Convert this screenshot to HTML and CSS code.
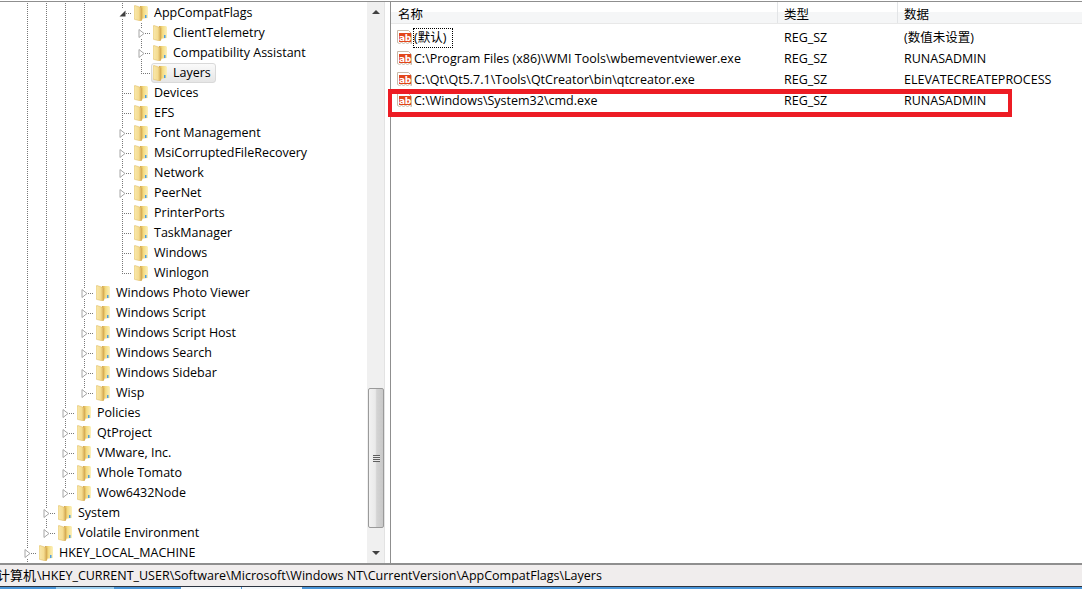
FILE: index.html
```html
<!DOCTYPE html>
<html lang="zh">
<head>
<meta charset="utf-8">
<title>注册表编辑器</title>
<link rel="stylesheet" href="styles.css">
</head>
<body>
<svg class="defs" width="0" height="0" aria-hidden="true">
  <defs>
    <linearGradient id="fa" x1="0" x2="1" y1="0" y2="0"><stop offset="0" stop-color="#f8e8ae"/><stop offset=".6" stop-color="#f5dc90"/><stop offset="1" stop-color="#cfa24a"/></linearGradient>
    <linearGradient id="fb" x1="0" x2="1" y1="0" y2="0"><stop offset="0" stop-color="#cfa24a"/><stop offset=".4" stop-color="#f3d97e"/><stop offset="1" stop-color="#fcf1bd"/></linearGradient>
    <symbol id="folder" viewBox="0 0 14 16">
      <path d="M6 1h7l1 1v11l-8 1z" fill="url(#fb)"/>
      <path d="M0 1 1 .5l6 2 1 1V15l-1 1-6-1.500-1-.5z" fill="url(#fa)" stroke="#dcb458" stroke-width=".5"/>
      <path d="M11 10h1.500v3H11z" fill="#4f9fe0"/>
    </symbol>
    <symbol id="ab" viewBox="0 0 16 15">
      <path d="M.5.500h11l3 3v10l-2-1-2 1-2-1-2 1-2-1-2 1-2-1z" fill="#fff" stroke="#c9b9a8"/>
      <rect x="2" y="3" width="12" height="9" fill="#e2461c"/>
      <text x="8" y="10.500" class="abtext">ab</text>
    </symbol>
    <symbol id="closed" viewBox="0 0 7 9"><path d="M1 .5 6 4.500 1 8.500z" fill="#fff" stroke="#a6a6a6"/></symbol>
    <symbol id="open" viewBox="0 0 7 9"><path d="M6.500 1.500v6h-6z" fill="#404040"/></symbol>
  </defs>
</svg>
<div class="app">
  <div class="panes">
    <div class="left">
      <div class="tree">
        <div class="row"><i class="c v"></i><i class="c v"></i><i class="c v"></i><i class="c v"></i><i class="c"></i><i class="c x"><svg class="ex"><use href="#open"/></svg></i><span class="item"><svg class="fo"><use href="#folder"/></svg>AppCompatFlags</span></div>
        <div class="row"><i class="c v"></i><i class="c v"></i><i class="c v"></i><i class="c v"></i><i class="c"></i><i class="c v"></i><i class="c x"><svg class="ex"><use href="#closed"/></svg></i><span class="item"><svg class="fo"><use href="#folder"/></svg>ClientTelemetry</span></div>
        <div class="row"><i class="c v"></i><i class="c v"></i><i class="c v"></i><i class="c v"></i><i class="c"></i><i class="c v"></i><i class="c x"><svg class="ex"><use href="#closed"/></svg></i><span class="item"><svg class="fo"><use href="#folder"/></svg>Compatibility Assistant</span></div>
        <div class="row"><i class="c v"></i><i class="c v"></i><i class="c v"></i><i class="c v"></i><i class="c"></i><i class="c v"></i><i class="c l"></i><span class="item sel"><svg class="fo"><use href="#folder"/></svg>Layers</span></div>
        <div class="row"><i class="c v"></i><i class="c v"></i><i class="c v"></i><i class="c v"></i><i class="c"></i><i class="c x"></i><span class="item"><svg class="fo"><use href="#folder"/></svg>Devices</span></div>
        <div class="row"><i class="c v"></i><i class="c v"></i><i class="c v"></i><i class="c v"></i><i class="c"></i><i class="c x"></i><span class="item"><svg class="fo"><use href="#folder"/></svg>EFS</span></div>
        <div class="row"><i class="c v"></i><i class="c v"></i><i class="c v"></i><i class="c v"></i><i class="c"></i><i class="c x"><svg class="ex"><use href="#closed"/></svg></i><span class="item"><svg class="fo"><use href="#folder"/></svg>Font Management</span></div>
        <div class="row"><i class="c v"></i><i class="c v"></i><i class="c v"></i><i class="c v"></i><i class="c"></i><i class="c x"><svg class="ex"><use href="#closed"/></svg></i><span class="item"><svg class="fo"><use href="#folder"/></svg>MsiCorruptedFileRecovery</span></div>
        <div class="row"><i class="c v"></i><i class="c v"></i><i class="c v"></i><i class="c v"></i><i class="c"></i><i class="c x"><svg class="ex"><use href="#closed"/></svg></i><span class="item"><svg class="fo"><use href="#folder"/></svg>Network</span></div>
        <div class="row"><i class="c v"></i><i class="c v"></i><i class="c v"></i><i class="c v"></i><i class="c"></i><i class="c x"><svg class="ex"><use href="#closed"/></svg></i><span class="item"><svg class="fo"><use href="#folder"/></svg>PeerNet</span></div>
        <div class="row"><i class="c v"></i><i class="c v"></i><i class="c v"></i><i class="c v"></i><i class="c"></i><i class="c x"></i><span class="item"><svg class="fo"><use href="#folder"/></svg>PrinterPorts</span></div>
        <div class="row"><i class="c v"></i><i class="c v"></i><i class="c v"></i><i class="c v"></i><i class="c"></i><i class="c x"></i><span class="item"><svg class="fo"><use href="#folder"/></svg>TaskManager</span></div>
        <div class="row"><i class="c v"></i><i class="c v"></i><i class="c v"></i><i class="c v"></i><i class="c"></i><i class="c x"></i><span class="item"><svg class="fo"><use href="#folder"/></svg>Windows</span></div>
        <div class="row"><i class="c v"></i><i class="c v"></i><i class="c v"></i><i class="c v"></i><i class="c"></i><i class="c l"></i><span class="item"><svg class="fo"><use href="#folder"/></svg>Winlogon</span></div>
        <div class="row"><i class="c v"></i><i class="c v"></i><i class="c v"></i><i class="c x"><svg class="ex"><use href="#closed"/></svg></i><span class="item"><svg class="fo"><use href="#folder"/></svg>Windows Photo Viewer</span></div>
        <div class="row"><i class="c v"></i><i class="c v"></i><i class="c v"></i><i class="c x"><svg class="ex"><use href="#closed"/></svg></i><span class="item"><svg class="fo"><use href="#folder"/></svg>Windows Script</span></div>
        <div class="row"><i class="c v"></i><i class="c v"></i><i class="c v"></i><i class="c x"><svg class="ex"><use href="#closed"/></svg></i><span class="item"><svg class="fo"><use href="#folder"/></svg>Windows Script Host</span></div>
        <div class="row"><i class="c v"></i><i class="c v"></i><i class="c v"></i><i class="c x"><svg class="ex"><use href="#closed"/></svg></i><span class="item"><svg class="fo"><use href="#folder"/></svg>Windows Search</span></div>
        <div class="row"><i class="c v"></i><i class="c v"></i><i class="c v"></i><i class="c x"><svg class="ex"><use href="#closed"/></svg></i><span class="item"><svg class="fo"><use href="#folder"/></svg>Windows Sidebar</span></div>
        <div class="row"><i class="c v"></i><i class="c v"></i><i class="c v"></i><i class="c l"><svg class="ex"><use href="#closed"/></svg></i><span class="item"><svg class="fo"><use href="#folder"/></svg>Wisp</span></div>
        <div class="row"><i class="c v"></i><i class="c v"></i><i class="c x"><svg class="ex"><use href="#closed"/></svg></i><span class="item"><svg class="fo"><use href="#folder"/></svg>Policies</span></div>
        <div class="row"><i class="c v"></i><i class="c v"></i><i class="c x"><svg class="ex"><use href="#closed"/></svg></i><span class="item"><svg class="fo"><use href="#folder"/></svg>QtProject</span></div>
        <div class="row"><i class="c v"></i><i class="c v"></i><i class="c x"><svg class="ex"><use href="#closed"/></svg></i><span class="item"><svg class="fo"><use href="#folder"/></svg>VMware, Inc.</span></div>
        <div class="row"><i class="c v"></i><i class="c v"></i><i class="c x"><svg class="ex"><use href="#closed"/></svg></i><span class="item"><svg class="fo"><use href="#folder"/></svg>Whole Tomato</span></div>
        <div class="row"><i class="c v"></i><i class="c v"></i><i class="c l"><svg class="ex"><use href="#closed"/></svg></i><span class="item"><svg class="fo"><use href="#folder"/></svg>Wow6432Node</span></div>
        <div class="row"><i class="c v"></i><i class="c x"><svg class="ex"><use href="#closed"/></svg></i><span class="item"><svg class="fo"><use href="#folder"/></svg>System</span></div>
        <div class="row"><i class="c v"></i><i class="c l"><svg class="ex"><use href="#closed"/></svg></i><span class="item"><svg class="fo"><use href="#folder"/></svg>Volatile Environment</span></div>
        <div class="row"><i class="c x"><svg class="ex"><use href="#closed"/></svg></i><span class="item"><svg class="fo"><use href="#folder"/></svg>HKEY_LOCAL_MACHINE</span></div>
      </div>
      <div class="scrollbar">
        <div class="arrow"><span class="up"></span></div>
        <div class="track">
          <div class="thumb"><span class="grip"></span></div>
        </div>
        <div class="arrow"><span class="down"></span></div>
      </div>
    </div>
    <div class="right">
      <div class="head">
        <div class="h name">名称</div>
        <div class="h type">类型</div>
        <div class="h data">数据</div>
      </div>
      <div class="vals">
        <div class="val"><div class="name"><svg class="abi"><use href="#ab"/></svg><span class="focus">(默认)</span></div><div class="type">REG_SZ</div><div class="data">(数值未设置)</div></div>
        <div class="val"><div class="name"><svg class="abi"><use href="#ab"/></svg><span class="nm">C:\Program Files (x86)\WMI Tools\wbemeventviewer.exe</span></div><div class="type">REG_SZ</div><div class="data">RUNASADMIN</div></div>
        <div class="val"><div class="name"><svg class="abi"><use href="#ab"/></svg><span class="nm">C:\Qt\Qt5.7.1\Tools\QtCreator\bin\qtcreator.exe</span></div><div class="type">REG_SZ</div><div class="data">ELEVATECREATEPROCESS</div></div>
        <div class="val"><div class="name"><svg class="abi"><use href="#ab"/></svg><span class="nm">C:\Windows\System32\cmd.exe</span></div><div class="type">REG_SZ</div><div class="data">RUNASADMIN</div></div>
      </div>
      <div class="mark"></div>
    </div>
  </div>
  <div class="status"><span class="path"><span class="cn">计算机</span>\HKEY_CURRENT_USER\Software\Microsoft\Windows NT\CurrentVersion\AppCompatFlags\Layers</span></div>
  <div class="taskbar">
    <span class="tb w55"></span><span class="tb lt w58"></span><span class="tb w65"></span><span class="tb wh w60"></span><span class="tb wh w60"></span><span class="tb fill"></span>
  </div>
</div>
</body>
</html>
```

FILE: styles.css
```css
* { box-sizing: border-box; }
html, body { margin: 0; padding: 0; }
body {
  width: 1082px;
  height: 589px;
  overflow: hidden;
  background: #fff;
  color: #000;
  font: 12.5px/20px "Open Sans", "Noto Sans CJK SC", sans-serif;
}
.defs { display: block; height: 0; }
.abtext { font: bold 9px "DejaVu Sans", sans-serif; fill: #fff; text-anchor: middle; letter-spacing: -.3px; }

.app { display: flex; flex-direction: column; height: 589px; }
.panes {
  display: flex;
  height: 565px;
  border-bottom: 2px solid #8f8f8f;
  padding-top: 2px;
  position: relative;
  background: linear-gradient(#8f8f8f, #8f8f8f) 0 1px / 100% 1px no-repeat;
}

/* tree */
.left { display: flex; width: 390px; flex: none; border-right: 0; }
.tree { width: 367px; flex: none; padding: 1px 0 0 18px; overflow: hidden; }
.row { display: flex; height: 20px; align-items: stretch; white-space: nowrap; }
.c { display: block; position: relative; flex: none; width: 19px; height: 20px; background-repeat: no-repeat; }
.v {
  background-image: repeating-linear-gradient(#777 0 1px, transparent 1px 2px);
  background-size: 1px 20px;
  background-position: 9px 0;
}
.x {
  background-image:
    repeating-linear-gradient(#777 0 1px, transparent 1px 2px),
    repeating-linear-gradient(90deg, #777 0 1px, transparent 1px 2px);
  background-size: 1px 20px, 10px 1px;
  background-position: 9px 0, 9px 10px;
}
.l {
  background-image:
    repeating-linear-gradient(#777 0 1px, transparent 1px 2px),
    repeating-linear-gradient(90deg, #777 0 1px, transparent 1px 2px);
  background-size: 1px 10px, 10px 1px;
  background-position: 9px 0, 9px 10px;
}
.ex { position: absolute; left: 6px; top: 6px; width: 7px; height: 9px; background: #fff; }
.item {
  display: flex;
  align-items: center;
  height: 20px;
  padding: 0 4px 0 2px;
  border: 1px solid transparent;
  border-left-width: 0;
  border-right-width: 0;
}
.fo { flex: none; width: 14px; height: 16px; margin-right: 6px; }
.sel {
  height: 20px;
  padding-left: 1px;
  border: 1px solid #d9d9d9;
  border-radius: 3px;
  background: linear-gradient(#fafafa, #e6e6e6);
}

/* scrollbar */
.scrollbar { width: 18px; flex: none; display: flex; flex-direction: column; background: #f0f0f0; border-right: 1px solid #e3e3e3; }
.arrow { height: 20px; flex: none; display: flex; align-items: center; justify-content: center; }
.up { width: 0; height: 0; border: 4px solid transparent; border-top: 0; border-bottom: 4px solid #404040; }
.down { width: 0; height: 0; border: 4px solid transparent; border-bottom: 0; border-top: 4px solid #404040; }
.track { flex: 1; display: flex; flex-direction: column; justify-content: flex-end; padding-bottom: 15px; }
.thumb {
  width: 16px;
  margin-left: 1px;
  height: 140px;
  border: 1px solid #9a9a9a;
  border-radius: 2px;
  background: linear-gradient(90deg, #f2f2f2, #eaeaea 45%, #d4d4d4 55%, #c9c9c9);
  display: flex;
  align-items: center;
  justify-content: center;
}
.grip {
  width: 7px;
  height: 7px;
  background: repeating-linear-gradient(#5f5f5f 0 1px, #e8e8e8 1px 2px);
}

/* list */
.right { flex: 1; position: relative; border-left: 1px solid #8f8f8f; min-width: 0; }
.head { display: flex; height: 22px; background: linear-gradient(#fff 50%, #f5f6f7 50%); border-bottom: 1px solid #e8e8e8; line-height: 26px; }
.h { padding-left: 7px; border-right: 1px solid #e3e5e7; }
.h.data { border-right: 0; }
.name { width: 387px; flex: none; display: flex; align-items: center; }
.type { width: 120px; flex: none; padding-left: 6px; }
.data { flex: 1; padding-left: 6px; white-space: nowrap; }
.head .h.name { display: block; padding-left: 7px; }
.vals { padding-top: 3px; }
.val { display: flex; height: 21px; line-height: 21px; white-space: nowrap; }
.abi { flex: none; width: 16px; height: 15px; margin: 0 0 0 6px; }
.nm { padding-left: 1px; }
.focus { padding: 0 0 0 1px; width: 40px; height: 20px; outline: 1px dotted #000; outline-offset: -1px; line-height: 20px; }
.mark { position: absolute; left: -3px; top: 87px; width: 624px; height: 28px; border: 4px solid #ed1c24; border-top-width: 5px; border-bottom-width: 5px; }

/* status */
.status { height: 21px; flex: none; background: #f0eded; line-height: 21px; overflow: hidden; white-space: nowrap; }
.path { display: block; margin-left: -3px; }
.cn { font-size: 13px; margin-right: 1px; }
.taskbar { display: flex; height: 3px; flex: none; border-top: 1px solid #2c3440; background: #4a95d8; }
.tb { display: block; background: #4a95d8; margin-right: 1px; }
.lt { background: #9fd0f0; }
.wh { background: #f4f8fb; }
.w55 { width: 55px; }
.w58 { width: 58px; }
.w65 { width: 65px; }
.w60 { width: 60px; }
.fill { flex: 1; margin: 0; }
```
